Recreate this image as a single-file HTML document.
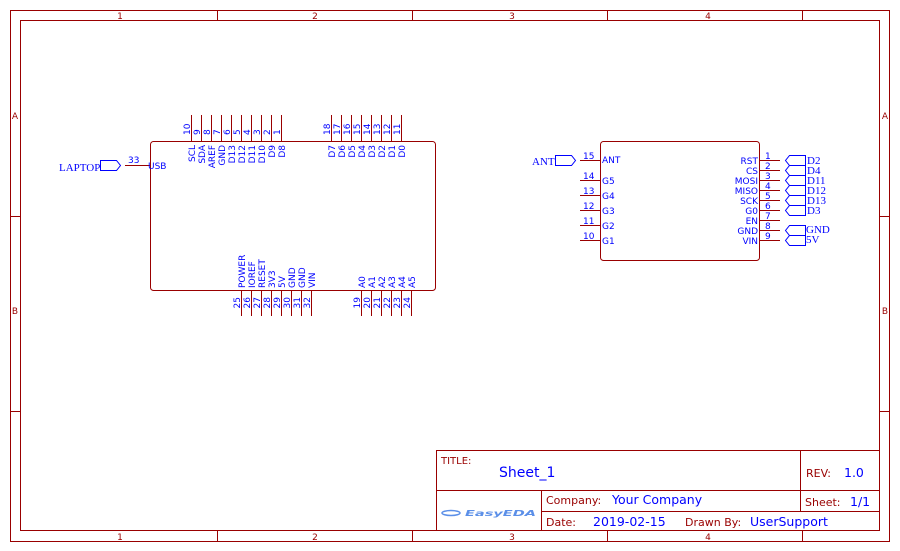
<!DOCTYPE html>
<html><head><meta charset="utf-8"><style>
html,body{margin:0;padding:0;background:#fff;}
svg{display:block;}
.r{stroke:#990000;fill:none;stroke-width:1;}
.p{stroke:#990000;stroke-width:1;}
.b{stroke:#0000ff;fill:none;stroke-width:1;}
.t{font-family:"DejaVu Sans","Liberation Sans",sans-serif;font-size:9px;fill:#0000ff;}
.s{font-family:"Liberation Serif",serif;font-size:11px;fill:#0000ff;}
.fr{font-family:"DejaVu Sans","Liberation Sans",sans-serif;font-size:9px;fill:#990000;}
.tb{font-family:"DejaVu Sans","Liberation Sans",sans-serif;font-size:11px;fill:#990000;}
.tv{font-family:"DejaVu Sans","Liberation Sans",sans-serif;font-size:12.5px;fill:#0000ff;}
</style></head><body>
<svg width="900" height="551" viewBox="0 0 900 551" xmlns="http://www.w3.org/2000/svg">
<rect x="10.5" y="10.5" width="879" height="531" class="r"/>
<rect x="20.5" y="20.5" width="859" height="510" class="r"/>
<g class="p">
<line x1="217.5" y1="10" x2="217.5" y2="20"/><line x1="412.5" y1="10" x2="412.5" y2="20"/><line x1="607.5" y1="10" x2="607.5" y2="20"/><line x1="802.5" y1="10" x2="802.5" y2="20"/>
<line x1="217.5" y1="531" x2="217.5" y2="541"/><line x1="412.5" y1="531" x2="412.5" y2="541"/><line x1="607.5" y1="531" x2="607.5" y2="541"/><line x1="802.5" y1="531" x2="802.5" y2="541"/>
<line x1="10" y1="216.5" x2="20" y2="216.5"/><line x1="10" y1="411.5" x2="20" y2="411.5"/>
<line x1="880" y1="216.5" x2="890" y2="216.5"/><line x1="880" y1="411.5" x2="890" y2="411.5"/>
</g>
<g class="fr" text-anchor="middle">
<text x="120" y="19">1</text><text x="315" y="19">2</text><text x="512" y="19">3</text><text x="708" y="19">4</text>
<text x="120" y="540">1</text><text x="315" y="540">2</text><text x="512" y="540">3</text><text x="708" y="540">4</text>
<text x="15" y="119">A</text><text x="15" y="314">B</text><text x="885" y="119">A</text><text x="885" y="314">B</text>
</g>

<rect x="150.5" y="141.5" width="285" height="149" rx="3" class="r"/>
<g class="p">
<line x1="191.5" y1="115" x2="191.5" y2="141"/><line x1="201.5" y1="115" x2="201.5" y2="141"/><line x1="211.5" y1="115" x2="211.5" y2="141"/><line x1="221.5" y1="115" x2="221.5" y2="141"/><line x1="231.5" y1="115" x2="231.5" y2="141"/><line x1="241.5" y1="115" x2="241.5" y2="141"/><line x1="251.5" y1="115" x2="251.5" y2="141"/><line x1="261.5" y1="115" x2="261.5" y2="141"/><line x1="271.5" y1="115" x2="271.5" y2="141"/><line x1="281.5" y1="115" x2="281.5" y2="141"/>
<line x1="331.5" y1="115" x2="331.5" y2="141"/><line x1="341.5" y1="115" x2="341.5" y2="141"/><line x1="351.5" y1="115" x2="351.5" y2="141"/><line x1="361.5" y1="115" x2="361.5" y2="141"/><line x1="371.5" y1="115" x2="371.5" y2="141"/><line x1="381.5" y1="115" x2="381.5" y2="141"/><line x1="391.5" y1="115" x2="391.5" y2="141"/><line x1="401.5" y1="115" x2="401.5" y2="141"/>
<line x1="241.5" y1="291" x2="241.5" y2="316"/><line x1="251.5" y1="291" x2="251.5" y2="316"/><line x1="261.5" y1="291" x2="261.5" y2="316"/><line x1="271.5" y1="291" x2="271.5" y2="316"/><line x1="281.5" y1="291" x2="281.5" y2="316"/><line x1="291.5" y1="291" x2="291.5" y2="316"/><line x1="301.5" y1="291" x2="301.5" y2="316"/><line x1="311.5" y1="291" x2="311.5" y2="316"/>
<line x1="361.5" y1="291" x2="361.5" y2="316"/><line x1="371.5" y1="291" x2="371.5" y2="316"/><line x1="381.5" y1="291" x2="381.5" y2="316"/><line x1="391.5" y1="291" x2="391.5" y2="316"/><line x1="401.5" y1="291" x2="401.5" y2="316"/><line x1="411.5" y1="291" x2="411.5" y2="316"/>
<line x1="125" y1="165.5" x2="150" y2="165.5"/>
</g>
<g class="t">
<text transform="translate(190,135) rotate(-90)">10</text><text transform="translate(200,135) rotate(-90)">9</text><text transform="translate(210,135) rotate(-90)">8</text><text transform="translate(220,135) rotate(-90)">7</text><text transform="translate(230,135) rotate(-90)">6</text><text transform="translate(240,135) rotate(-90)">5</text><text transform="translate(250,135) rotate(-90)">4</text><text transform="translate(260,135) rotate(-90)">3</text><text transform="translate(270,135) rotate(-90)">2</text><text transform="translate(280,135) rotate(-90)">1</text>
<text transform="translate(330,135) rotate(-90)">18</text><text transform="translate(340,135) rotate(-90)">17</text><text transform="translate(350,135) rotate(-90)">16</text><text transform="translate(360,135) rotate(-90)">15</text><text transform="translate(370,135) rotate(-90)">14</text><text transform="translate(380,135) rotate(-90)">13</text><text transform="translate(390,135) rotate(-90)">12</text><text transform="translate(400,135) rotate(-90)">11</text>
</g>
<g class="t" text-anchor="end">
<text transform="translate(195,145) rotate(-90)">SCL</text><text transform="translate(205,145) rotate(-90)">SDA</text><text transform="translate(215,145) rotate(-90)">AREF</text><text transform="translate(225,145) rotate(-90)">GND</text><text transform="translate(235,145) rotate(-90)">D13</text><text transform="translate(245,145) rotate(-90)">D12</text><text transform="translate(255,145) rotate(-90)">D11</text><text transform="translate(265,145) rotate(-90)">D10</text><text transform="translate(275,145) rotate(-90)">D9</text><text transform="translate(285,145) rotate(-90)">D8</text>
<text transform="translate(335,145) rotate(-90)">D7</text><text transform="translate(345,145) rotate(-90)">D6</text><text transform="translate(355,145) rotate(-90)">D5</text><text transform="translate(365,145) rotate(-90)">D4</text><text transform="translate(375,145) rotate(-90)">D3</text><text transform="translate(385,145) rotate(-90)">D2</text><text transform="translate(395,145) rotate(-90)">D1</text><text transform="translate(405,145) rotate(-90)">D0</text>
<text transform="translate(240,297) rotate(-90)">25</text><text transform="translate(250,297) rotate(-90)">26</text><text transform="translate(260,297) rotate(-90)">27</text><text transform="translate(270,297) rotate(-90)">28</text><text transform="translate(280,297) rotate(-90)">29</text><text transform="translate(290,297) rotate(-90)">30</text><text transform="translate(300,297) rotate(-90)">31</text><text transform="translate(310,297) rotate(-90)">32</text>
<text transform="translate(360,297) rotate(-90)">19</text><text transform="translate(370,297) rotate(-90)">20</text><text transform="translate(380,297) rotate(-90)">21</text><text transform="translate(390,297) rotate(-90)">22</text><text transform="translate(400,297) rotate(-90)">23</text><text transform="translate(410,297) rotate(-90)">24</text>
</g>
<g class="t">
<text transform="translate(245,288) rotate(-90)">POWER</text><text transform="translate(255,288) rotate(-90)">IOREF</text><text transform="translate(265,288) rotate(-90)">RESET</text><text transform="translate(275,288) rotate(-90)">3V3</text><text transform="translate(285,288) rotate(-90)">5V</text><text transform="translate(295,288) rotate(-90)">GND</text><text transform="translate(305,288) rotate(-90)">GND</text><text transform="translate(315,288) rotate(-90)">VIN</text>
<text transform="translate(365,288) rotate(-90)">A0</text><text transform="translate(375,288) rotate(-90)">A1</text><text transform="translate(385,288) rotate(-90)">A2</text><text transform="translate(395,288) rotate(-90)">A3</text><text transform="translate(405,288) rotate(-90)">A4</text><text transform="translate(415,288) rotate(-90)">A5</text>
<text x="128" y="163">33</text><text x="148" y="169">USB</text>
</g>
<text class="s" x="59" y="171">LAPTOP</text>
<path class="b" d="M100.5 160.5 H116.5 L120.5 165.5 L116.5 170.5 H100.5 Z"/>

<rect x="600.5" y="141.5" width="159" height="119" rx="3" class="r"/>
<g class="p">
<line x1="580" y1="160.5" x2="600" y2="160.5"/><line x1="580" y1="180.5" x2="600" y2="180.5"/><line x1="580" y1="195.5" x2="600" y2="195.5"/><line x1="580" y1="210.5" x2="600" y2="210.5"/><line x1="580" y1="225.5" x2="600" y2="225.5"/><line x1="580" y1="240.5" x2="600" y2="240.5"/>
<line x1="760" y1="160.5" x2="780" y2="160.5"/><line x1="760" y1="170.5" x2="780" y2="170.5"/><line x1="760" y1="180.5" x2="780" y2="180.5"/><line x1="760" y1="190.5" x2="780" y2="190.5"/><line x1="760" y1="200.5" x2="780" y2="200.5"/><line x1="760" y1="210.5" x2="780" y2="210.5"/><line x1="760" y1="220.5" x2="780" y2="220.5"/><line x1="760" y1="230.5" x2="780" y2="230.5"/><line x1="760" y1="240.5" x2="780" y2="240.5"/>
</g>
<g class="t">
<text x="583" y="159">15</text><text x="583" y="179">14</text><text x="583" y="194">13</text><text x="583" y="209">12</text><text x="583" y="224">11</text><text x="583" y="239">10</text>
<text x="602" y="163">ANT</text><text x="602" y="184">G5</text><text x="602" y="199">G4</text><text x="602" y="214">G3</text><text x="602" y="229">G2</text><text x="602" y="244">G1</text>
<text x="765" y="159">1</text><text x="765" y="169">2</text><text x="765" y="179">3</text><text x="765" y="189">4</text><text x="765" y="199">5</text><text x="765" y="209">6</text><text x="765" y="219">7</text><text x="765" y="229">8</text><text x="765" y="239">9</text>
</g>
<g class="t" text-anchor="end">
<text x="758" y="164">RST</text><text x="758" y="174">CS</text><text x="758" y="184">MOSI</text><text x="758" y="194">MISO</text><text x="758" y="204">SCK</text><text x="758" y="214">G0</text><text x="758" y="224">EN</text><text x="758" y="234">GND</text><text x="758" y="244">VIN</text>
</g>
<text class="s" x="532" y="165">ANT</text>
<path class="b" d="M555.5 155.5 H571.5 L575.5 160.5 L571.5 165.5 H555.5 Z"/>
<g class="b">
<path d="M805.5 155.5 H789.5 L785.5 160.5 L789.5 165.5 H805.5 Z"/>
<path d="M805.5 165.5 H789.5 L785.5 170.5 L789.5 175.5 H805.5 Z"/>
<path d="M805.5 175.5 H789.5 L785.5 180.5 L789.5 185.5 H805.5 Z"/>
<path d="M805.5 185.5 H789.5 L785.5 190.5 L789.5 195.5 H805.5 Z"/>
<path d="M805.5 195.5 H789.5 L785.5 200.5 L789.5 205.5 H805.5 Z"/>
<path d="M805.5 205.5 H789.5 L785.5 210.5 L789.5 215.5 H805.5 Z"/>
<path d="M805.5 225.5 H789.5 L785.5 230.5 L789.5 235.5 H805.5 Z"/>
<path d="M805.5 235.5 H789.5 L785.5 240.5 L789.5 245.5 H805.5 Z"/>
</g>
<g class="s">
<text x="807" y="164">D2</text><text x="807" y="174">D4</text><text x="807" y="184">D11</text><text x="807" y="194">D12</text><text x="807" y="204">D13</text><text x="807" y="214">D3</text><text x="806" y="233">GND</text><text x="806" y="243">5V</text>
</g>

<g class="r">
<rect x="436.5" y="450.5" width="443" height="80"/>
<line x1="436" y1="490.5" x2="880" y2="490.5"/>
<line x1="541" y1="511.5" x2="880" y2="511.5"/>
<line x1="800.5" y1="450" x2="800.5" y2="511"/>
<line x1="541.5" y1="490" x2="541.5" y2="531"/>
</g>
<text class="fr" x="441" y="464" style="font-size:10px">TITLE:</text>
<text class="tv" x="499" y="477" style="font-size:14px">Sheet_1</text>
<text class="tb" x="806" y="477">REV:</text><text class="tv" x="844" y="477">1.0</text>
<text class="tb" x="546" y="504">Company:</text><text class="tv" x="612" y="504">Your Company</text>
<text class="tb" x="805" y="506">Sheet:</text><text class="tv" x="850" y="506">1/1</text>
<text class="tb" x="546" y="526">Date:</text><text class="tv" x="593" y="526">2019-02-15</text>
<text class="tb" x="685" y="526">Drawn By:</text><text class="tv" x="750" y="526">UserSupport</text>
<g>
<ellipse cx="451" cy="513" rx="9" ry="2.5" fill="none" stroke="#5b8fe8" stroke-width="1.5"/>
<text x="465" y="516" textLength="71" lengthAdjust="spacingAndGlyphs" style="font-family:'DejaVu Sans',sans-serif;font-size:8px;font-style:italic;font-weight:bold;fill:#5b8fe8">EasyEDA</text>
</g>
</svg>
</body></html>
